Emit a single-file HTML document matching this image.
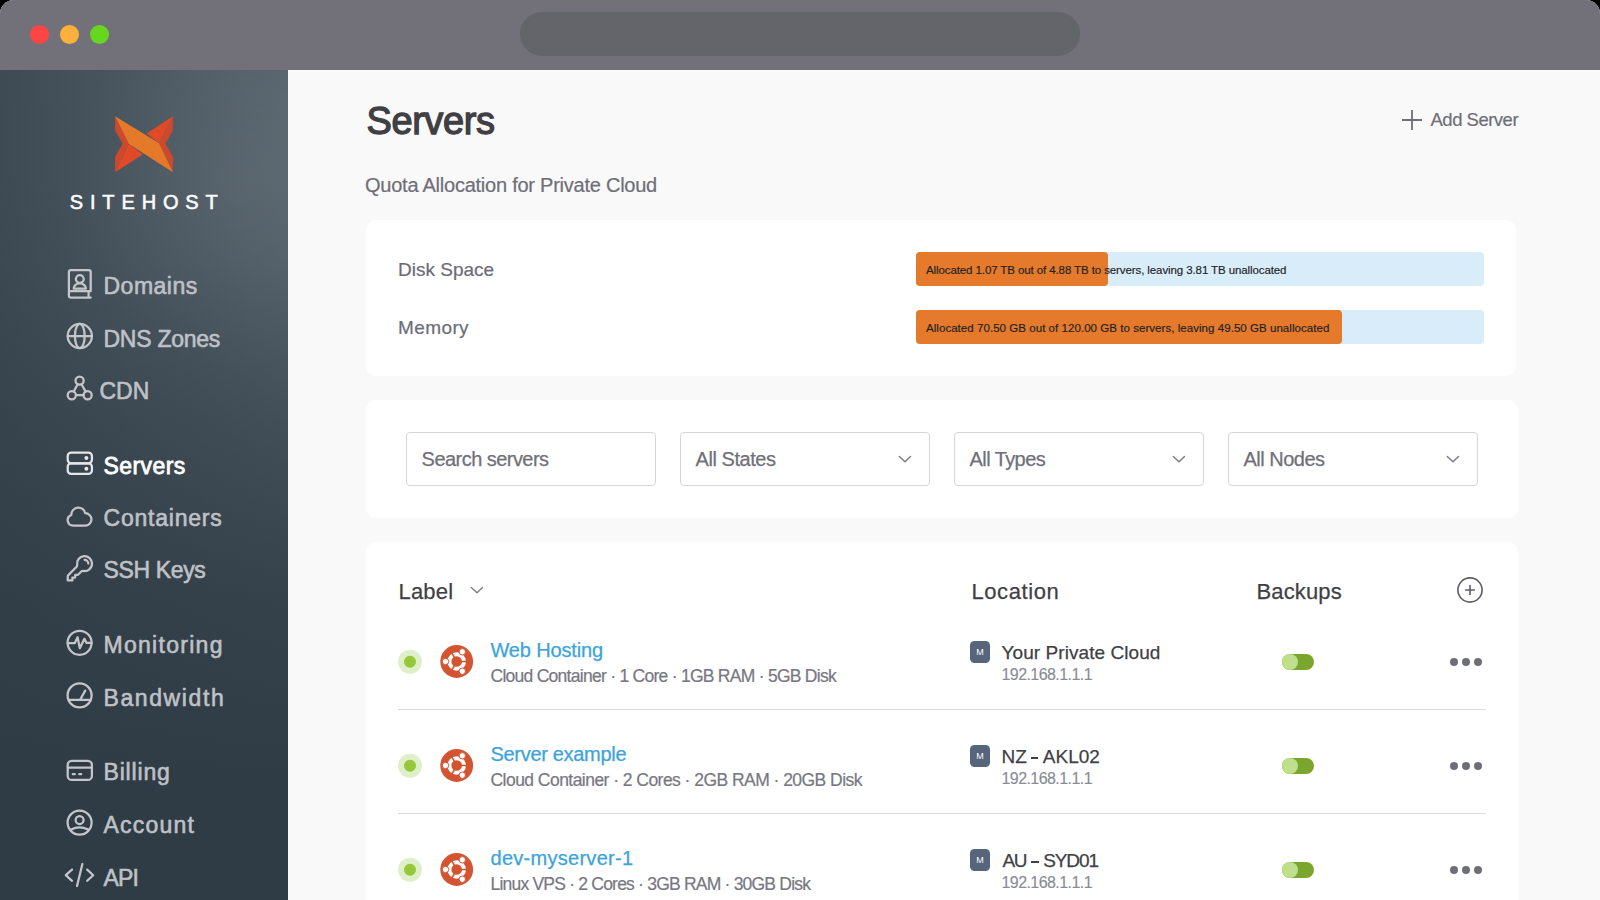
<!DOCTYPE html>
<html>
<head>
<meta charset="utf-8">
<style>
html,body{margin:0;padding:0;width:1600px;height:900px;overflow:hidden;background:#000;}
*{box-sizing:border-box;}
body{font-family:"Liberation Sans",sans-serif;}
.win{position:absolute;left:0;top:0;width:1600px;height:900px;border-radius:14px 14px 0 0;overflow:hidden;background:#f9f9f9;}
.bar{position:absolute;left:0;top:0;width:1600px;height:70px;background:#72717a;}
.dot{position:absolute;top:24.5px;width:19px;height:19px;border-radius:50%;}
.url{position:absolute;left:520px;top:12px;width:560px;height:44px;border-radius:22px;background:#64646b;}
.side{position:absolute;left:0;top:70px;width:288px;height:830px;
  background:linear-gradient(to bottom,rgba(47,59,69,0) 0px,rgba(47,59,69,0.02) 110px,rgba(47,59,69,0.12) 190px,rgba(47,59,69,0.52) 350px,rgba(47,59,69,0.85) 530px,rgba(47,59,69,1) 720px),radial-gradient(ellipse 170px 200px at 240px 110px,rgba(255,255,255,0.045),rgba(255,255,255,0)),linear-gradient(to right,#3e4a54,#58646d);}
.t{position:absolute;white-space:nowrap;line-height:1;}
.nav{position:absolute;left:103.5px;font-size:23px;font-weight:400;color:#bfc1c6;-webkit-text-stroke:0.6px #bfc1c6;line-height:1;white-space:nowrap;}
svg{position:absolute;overflow:visible;}
.card{position:absolute;background:#fff;border-radius:10px;}
.sel{position:absolute;top:432px;width:250px;height:54px;border:1px solid #d6d6da;border-radius:4px;background:#fff;}
.track{position:absolute;left:916px;width:568px;height:34px;border-radius:4px;background:#d9ecfa;}
.fill{position:absolute;left:0;top:0;height:34px;border-radius:4px;background:#e5792c;}
.btxt{position:absolute;left:10px;top:12.5px;font-size:11.5px;line-height:1;color:#222;white-space:nowrap;-webkit-text-stroke:0.15px #222;}
.div{position:absolute;left:398px;width:1088px;height:1px;background:#dcdce0;}
.mb{position:absolute;left:970px;width:20px;height:22px;border-radius:4.5px;background:#566579;color:#fff;font-size:9px;font-weight:400;line-height:22px;text-align:center;}
.name{font-size:20px;color:#3ca4da;-webkit-text-stroke:0.25px #3ca4da;}
.det{font-size:17.5px;color:#777782;-webkit-text-stroke:0.2px #777782;}
.loc{font-size:19px;color:#3f3f46;-webkit-text-stroke:0.25px #3f3f46;}
.ip{font-size:16px;color:#8b8b96;-webkit-text-stroke:0.15px #8b8b96;}
.hd{font-size:22px;color:#3f3f46;-webkit-text-stroke:0.25px #3f3f46;}
.ph{font-size:20px;color:#6f707a;-webkit-text-stroke:0.25px #6f707a;}
</style>
</head>
<body>
<div class="win">
  <div class="bar">
    <div class="dot" style="left:29.5px;background:#fe4545;"></div>
    <div class="dot" style="left:59.5px;background:#feb03c;"></div>
    <div class="dot" style="left:89.5px;background:#66d61e;"></div>
    <div class="url"></div>
  </div>
  <div class="side"></div>

  <!-- logo -->
  <svg style="left:104px;top:106px" width="80" height="80" viewBox="0 0 900 900">
    <polygon points="125,115 280,428 125,745 125,570 210,425 125,275" fill="#cc4a2b"/>
    <polygon points="280,428 435,545 125,745" fill="#e04a26"/>
    <polygon points="775,745 620,418 775,115 775,275 690,425 775,570" fill="#cc4a2b"/>
    <polygon points="620,418 480,310 775,115" fill="#e04a26"/>
    <polygon points="125,115 620,418 775,745 280,428" fill="#e5792a"/>
  </svg>
  <div class="t" style="left:69.75px;top:192px;font-size:20px;letter-spacing:6.86px;color:#fafafa;-webkit-text-stroke:0.6px #fafafa;">SITEHOST</div>

  <!-- sidebar icons -->
  <svg style="left:0;top:0" width="288" height="900" viewBox="0 0 288 900" fill="none" stroke="#c4c6cb" stroke-width="2.25" stroke-linecap="round" stroke-linejoin="round">
    <path d="M90.7 291.2V272a2 2 0 0 0-2-2H71a2.1 2.1 0 0 0-2.1 2.1V295.4a2.1 2.1 0 0 0 2.1 2.1H90.7M68.9 293.3a2.1 2.1 0 0 1 2.1-2.1H90.7M88.6 291.2V297.5"/>
    <circle cx="79.8" cy="279" r="3.9"/>
    <path d="M73.7 288.6a6.1 5.3 0 0 1 12.2 0Z"/>
    <circle cx="79.8" cy="336" r="12.1"/>
    <ellipse cx="79.8" cy="336" rx="4.9" ry="12.1"/>
    <path d="M67.7 336.2H91.9"/>
    <circle cx="79.6" cy="380.6" r="4.1"/>
    <circle cx="71.8" cy="395.2" r="4.1"/>
    <circle cx="87.6" cy="395.2" r="4.1"/>
    <path d="M77.67 384.22L73.73 391.58M81.53 384.22L85.67 391.58M75.9 395.2H83.5"/>
    <g stroke="#e4e6e8">
      <rect x="67.7" y="452.5" width="24.2" height="10.8" rx="3.5"/>
      <rect x="67.7" y="463.3" width="24.2" height="10.6" rx="3.5"/>
      <circle cx="86.4" cy="458" r="0.9" fill="#e4e6e8"/>
      <circle cx="86.4" cy="468.8" r="0.9" fill="#e4e6e8"/>
    </g>
    <path d="M73.2 525.6A5.5 5.5 0 0 1 71.27 514.95A7.1 7.1 0 0 1 85.3 513.22A6.2 6.2 0 0 1 85.7 525.6Z"/>
    <g transform="translate(64.92 553.3) scale(1.245)" stroke-width="1.8">
      <path d="M15.75 5.25a3 3 0 0 1 3 3m3 0a6 6 0 0 1-7.029 5.912c-.563-.097-1.159.026-1.563.43L10.5 17.25H8.25v2.25H6v2.25H2.25v-2.818c0-.597.237-1.17.659-1.591l6.499-6.499c.404-.404.527-1 .43-1.563A6 6 0 1 1 21.75 8.25Z"/>
    </g>
    <circle cx="79.6" cy="642.8" r="12"/>
    <polyline points="67.6,643 74.8,643 77.6,637.2 79.8,648.2 84.4,638.8 86.4,642.8 91.6,642.8"/>
    <circle cx="79.6" cy="695.4" r="12"/>
    <path d="M68.4 699.8H90.8M80.4 699.2L85.2 690.6"/>
    <rect x="67.7" y="760.9" width="24.2" height="19" rx="4"/>
    <path d="M67.7 767.6H91.9M72.8 774.2H74.8M79.2 774.2H81.2"/>
    <circle cx="79.6" cy="822.6" r="12"/>
    <circle cx="79.6" cy="820" r="4"/>
    <path d="M71.2 829.6Q79.6 825 88 829.6"/>
    <path d="M72 869.6L65.8 875.2L72 880.8M87.2 869.6L93.2 875.2L87.2 880.8M82.4 864L77 886"/>
  </svg>

  <!-- nav text -->
  <div class="nav" style="top:275px;letter-spacing:0.5px">Domains</div>
  <div class="nav" style="top:327.65px;letter-spacing:-0.25px">DNS Zones</div>
  <div class="nav" style="top:380.35px;left:99.5px;letter-spacing:0px">CDN</div>
  <div class="nav" style="top:454.75px;letter-spacing:0.42px;color:#fff;-webkit-text-stroke:0.8px #fff">Servers</div>
  <div class="nav" style="top:507.15px;letter-spacing:0.78px">Containers</div>
  <div class="nav" style="top:559.35px;letter-spacing:-0.36px">SSH Keys</div>
  <div class="nav" style="top:634.45px;letter-spacing:1.29px">Monitoring</div>
  <div class="nav" style="top:686.75px;letter-spacing:1.6px">Bandwidth</div>
  <div class="nav" style="top:761.25px;letter-spacing:0.83px">Billing</div>
  <div class="nav" style="top:814.45px;letter-spacing:1.2px">Account</div>
  <div class="nav" style="top:867.45px;letter-spacing:-0.9px">API</div>

  <!-- header -->
  <div class="t" style="left:366.5px;top:101.7px;font-size:38px;font-weight:400;letter-spacing:-0.42px;color:#3f3f44;-webkit-text-stroke:1.3px #3f3f44;">Servers</div>
  <div class="t" style="left:365px;top:174.75px;font-size:20px;letter-spacing:-0.24px;color:#6e6e78;-webkit-text-stroke:0.2px #6e6e78;">Quota Allocation for Private Cloud</div>
  <svg style="left:0;top:0" width="1600" height="900" viewBox="0 0 1600 900" fill="none" stroke="#6e6e78" stroke-width="1.8">
    <path d="M1402 120H1422M1412 110V130"/>
  </svg>
  <div class="t" style="left:1430.5px;top:111.4px;font-size:18.5px;letter-spacing:-0.5px;color:#6e6e78;-webkit-text-stroke:0.2px #6e6e78;">Add Server</div>

  <!-- quota card -->
  <div class="card" style="left:366px;top:220px;width:1150px;height:156px;"></div>
  <div class="t" style="left:398px;top:259.5px;font-size:19px;color:#6b6c76;-webkit-text-stroke:0.2px #6b6c76;">Disk Space</div>
  <div class="t" style="left:398px;top:318.35px;font-size:19px;letter-spacing:0.4px;color:#6b6c76;-webkit-text-stroke:0.2px #6b6c76;">Memory</div>
  <div class="track" style="top:252px;"><div class="fill" style="width:192px;"></div><div class="btxt" style="letter-spacing:-0.1px">Allocated 1.07 TB out of 4.88 TB to servers, leaving 3.81 TB unallocated</div></div>
  <div class="track" style="top:310px;"><div class="fill" style="width:426px;"></div><div class="btxt" style="letter-spacing:0.05px">Allocated 70.50 GB out of 120.00 GB to servers, leaving 49.50 GB unallocated</div></div>

  <!-- filter card -->
  <div class="card" style="left:366px;top:400px;width:1152px;height:118px;"></div>
  <div class="sel" style="left:406px;"></div>
  <div class="sel" style="left:680px;"></div>
  <div class="sel" style="left:954px;"></div>
  <div class="sel" style="left:1228px;"></div>
  <div class="t ph" style="left:421.6px;top:449.1px;letter-spacing:-0.54px;">Search servers</div>
  <div class="t ph" style="left:695.5px;top:449.1px;letter-spacing:-0.44px;">All States</div>
  <div class="t ph" style="left:969.5px;top:449.1px;letter-spacing:-0.57px;">All Types</div>
  <div class="t ph" style="left:1243.5px;top:449.1px;letter-spacing:-0.5px;">All Nodes</div>
  <svg style="left:0;top:0" width="1600" height="900" viewBox="0 0 1600 900" fill="none" stroke="#7c7d88" stroke-width="1.5" stroke-linecap="round" stroke-linejoin="round">
    <path d="M899.3 456.5L905 461.8L910.5 456.5M1173.3 456.5L1179 461.8L1184.5 456.5M1447.3 456.5L1453 461.8L1458.5 456.5"/>
  </svg>

  <!-- table card -->
  <div class="card" style="left:366px;top:542px;width:1152px;height:420px;"></div>
  <div class="t hd" style="left:398.5px;top:580.5px;letter-spacing:0.18px;">Label</div>
  <div class="t hd" style="left:971.5px;top:580.5px;letter-spacing:0.57px;">Location</div>
  <div class="t hd" style="left:1256.5px;top:580.5px;letter-spacing:0.13px;">Backups</div>
  <svg style="left:0;top:0" width="1600" height="900" viewBox="0 0 1600 900" fill="none" stroke-linecap="round" stroke-linejoin="round">
    <path d="M471.3 587.5L477 592.8L482.5 587.5" stroke="#80808c" stroke-width="1.5"/>
    <circle cx="1470" cy="590" r="12.1" stroke="#5e5e68" stroke-width="1.6"/>
    <path d="M1465.1 590H1474.9M1470 585.1V594.9" stroke="#5e5e68" stroke-width="1.6" stroke-linecap="butt"/>
  </svg>

  <div class="div" style="top:709px;"></div>
  <div class="div" style="top:813px;"></div>

  <!-- row icons -->
  <svg style="left:0;top:0" width="1600" height="900" viewBox="0 0 1600 900">
    <defs>
      <g id="status">
        <circle cx="410" cy="661.7" r="12" fill="#dff0c8"/>
        <circle cx="410" cy="661.7" r="6" fill="#95c83a"/>
      </g>
      <g id="ubu">
        <circle cx="456.7" cy="661.5" r="16.4" fill="#d35430"/>
        <circle cx="456.7" cy="661.5" r="7.3" fill="none" stroke="#fff" stroke-width="4"/>
        <g stroke="#d35430" stroke-width="1.6">
          <path d="M456.7 661.5L468 661.5M456.7 661.5L451.05 651.7M456.7 661.5L451.05 671.3"/>
        </g>
        <circle cx="445.5" cy="661.5" r="3.2" fill="#fff" stroke="#d35430" stroke-width="1"/>
        <circle cx="462.3" cy="651.8" r="3.2" fill="#fff" stroke="#d35430" stroke-width="1"/>
        <circle cx="462.3" cy="671.2" r="3.2" fill="#fff" stroke="#d35430" stroke-width="1"/>
      </g>
      <g id="tog">
        <rect x="1282" y="654" width="32" height="16" rx="8" fill="#7aa62f"/>
        <circle cx="1290" cy="662" r="8" fill="#bee08b"/>
        <circle cx="1454" cy="662" r="4" fill="#6e6e78"/>
        <circle cx="1466" cy="662" r="4" fill="#6e6e78"/>
        <circle cx="1478" cy="662" r="4" fill="#6e6e78"/>
      </g>
    </defs>
    <use href="#status"/><use href="#ubu"/><use href="#tog"/>
    <g transform="translate(0 104)"><use href="#status"/><use href="#ubu"/><use href="#tog"/></g>
    <g transform="translate(0 208)"><use href="#status"/><use href="#ubu"/><use href="#tog"/></g>
  </svg>

  <!-- row 1 -->
  <div class="t name" style="left:490.5px;top:640px;letter-spacing:-0.16px;">Web Hosting</div>
  <div class="t det" style="left:490.5px;top:667.6px;letter-spacing:-0.73px;">Cloud Container · 1 Core · 1GB RAM · 5GB Disk</div>
  <div class="mb" style="top:641px;">M</div>
  <div class="t loc" style="left:1001.6px;top:643px;letter-spacing:0.06px;">Your Private Cloud</div>
  <div class="t ip" style="left:1001.5px;top:666.6px;letter-spacing:-0.57px;">192.168.1.1.1</div>

  <!-- row 2 -->
  <div class="t name" style="left:490.5px;top:744px;letter-spacing:-0.31px;">Server example</div>
  <div class="t det" style="left:490.5px;top:771.6px;letter-spacing:-0.54px;">Cloud Container · 2 Cores · 2GB RAM · 20GB Disk</div>
  <div class="mb" style="top:745px;">M</div>
  <div class="t loc" style="left:1001.5px;top:746.65px;">NZ</div><div style="position:absolute;left:1031px;top:757.4px;width:7.2px;height:1.8px;background:#3f3f46"></div><div class="t loc" style="left:1042.8px;top:746.65px;">AKL02</div>
  <div class="t ip" style="left:1001.5px;top:770.9px;letter-spacing:-0.57px;">192.168.1.1.1</div>

  <!-- row 3 -->
  <div class="t name" style="left:490.5px;top:848px;letter-spacing:0.28px;">dev-myserver-1</div>
  <div class="t det" style="left:490.5px;top:875.6px;letter-spacing:-0.79px;">Linux VPS · 2 Cores · 3GB RAM · 30GB Disk</div>
  <div class="mb" style="top:849px;">M</div>
  <div class="t loc" style="left:1002.5px;top:850.65px;letter-spacing:-1.5px;">AU</div><div style="position:absolute;left:1031.3px;top:861.2px;width:7.4px;height:1.8px;background:#3f3f46"></div><div class="t loc" style="left:1043.2px;top:850.65px;letter-spacing:-1.1px;">SYD01</div>
  <div class="t ip" style="left:1001.5px;top:874.9px;letter-spacing:-0.57px;">192.168.1.1.1</div>
</div>
</body>
</html>
